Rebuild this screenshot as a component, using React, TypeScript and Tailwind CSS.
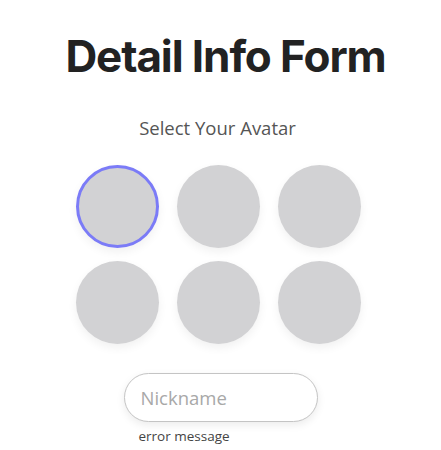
export default function App() {
  const avatars = [0, 1, 2, 3, 4, 5]
  const selected = 0

  return (
    <div className="flex min-h-[450px] w-full flex-col items-center bg-white pt-[26px]">
      <h1 className="pl-[10px] font-['Inter',sans-serif] text-[44px] font-bold leading-[60px] tracking-[-1.1px] text-[#222]">
        Detail Info Form
      </h1>

      <p className="mt-[30px] mr-[6px] font-['Open_Sans',sans-serif] text-[18.5px] leading-[24px] text-[#555]">
        Select Your Avatar
      </p>

      <div className="mt-[25px] mr-[5px] grid grid-cols-3 gap-x-[18px] gap-y-[13px]">
        {avatars.map((i) => (
          <button
            key={i}
            className={
              i === selected
                ? "h-[83px] w-[83px] rounded-full border-[3px] border-[#7b7bf7] bg-[#d2d2d4] shadow-[0_4px_10px_rgba(0,0,0,0.06)]"
                : "h-[83px] w-[83px] rounded-full bg-[#d2d2d4] shadow-[0_4px_10px_rgba(0,0,0,0.06)]"
            }
          />
        ))}
      </div>

      <div className="mt-[29px] flex flex-col">
        <input
          placeholder="Nickname"
          className="h-[49px] w-[194px] rounded-full border border-[#c4c4c4] bg-white px-[16px] font-['Open_Sans',sans-serif] text-[18.5px] text-[#333] shadow-[0_3px_8px_rgba(0,0,0,0.08)] outline-none placeholder:text-[#a8a8a8]"
        />
        <span className="mt-[5px] pl-[15px] font-['Open_Sans',sans-serif] text-[13.5px] leading-[18px] text-[#444]">
          error message
        </span>
      </div>
    </div>
  )
}
